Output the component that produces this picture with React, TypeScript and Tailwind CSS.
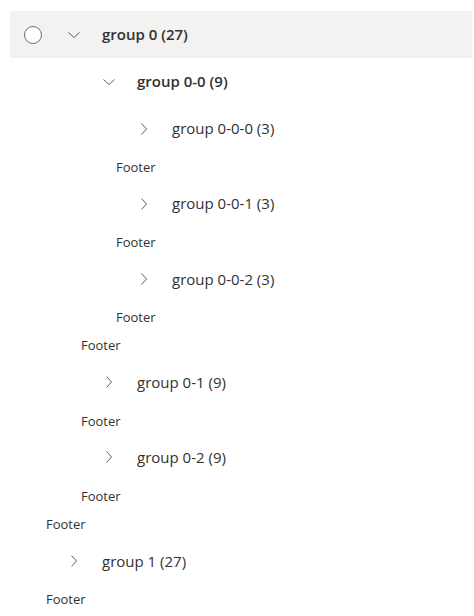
type Group = {
  key: string;
  name: string;
  count: number;
  expanded?: boolean;
  hovered?: boolean;
  children?: Group[];
};

const GROUPS: Group[] = [
  {
    key: "0",
    name: "group 0",
    count: 27,
    expanded: true,
    hovered: true,
    children: [
      {
        key: "0-0",
        name: "group 0-0",
        count: 9,
        expanded: true,
        children: [
          { key: "0-0-0", name: "group 0-0-0", count: 3 },
          { key: "0-0-1", name: "group 0-0-1", count: 3 },
          { key: "0-0-2", name: "group 0-0-2", count: 3 },
        ],
      },
      { key: "0-1", name: "group 0-1", count: 9 },
      { key: "0-2", name: "group 0-2", count: 9 },
    ],
  },
  { key: "1", name: "group 1", count: 27 },
];

const INDENT = 35;

function ChevronDown() {
  return (
    <svg width="12" height="12" viewBox="0 0 12 12" fill="none">
      <path d="M0.5 3.5 L6 8.5 L11.5 3.5" stroke="#605e5c" strokeWidth="1" />
    </svg>
  );
}

function ChevronRight() {
  return (
    <svg width="12" height="12" viewBox="0 0 12 12" fill="none">
      <path d="M3.5 0.5 L8.5 6 L3.5 11.5" stroke="#605e5c" strokeWidth="1" />
    </svg>
  );
}

function GroupHeader({ group, level }: { group: Group; level: number }) {
  return (
    <div
      className={`flex items-center h-[47px] ${
        group.hovered ? "bg-[#f3f2f1]" : ""
      }`}
    >
      {/* Check cell */}
      <div className="w-[46px] h-full flex items-center justify-center shrink-0">
        {group.hovered && (
          <span className="w-[18px] h-[18px] rounded-full border border-[#6f6d6b] bg-white" />
        )}
      </div>
      <div className="shrink-0" style={{ width: level * INDENT }} />
      {/* Expand button */}
      <div className="w-[36px] h-full flex items-center justify-center shrink-0">
        {group.expanded ? <ChevronDown /> : <ChevronRight />}
      </div>
      <div
        className={`pl-[10px] text-[15px] text-[#323130] whitespace-nowrap ${
          group.expanded ? "font-semibold" : "font-normal"
        }`}
      >
        {group.name} ({group.count})
      </div>
    </div>
  );
}

function GroupFooter({ level }: { level: number }) {
  return (
    <div
      className="flex items-center h-[28.2px] pt-[3px] text-[13px] text-[#323130]"
      style={{ paddingLeft: 36 + level * INDENT }}
    >
      Footer
    </div>
  );
}

function GroupNode({ group, level }: { group: Group; level: number }) {
  return (
    <div className="flex flex-col">
      <GroupHeader group={group} level={level} />
      {group.expanded &&
        group.children?.map((c) => (
          <GroupNode key={c.key} group={c} level={level + 1} />
        ))}
      <GroupFooter level={level} />
    </div>
  );
}

export default function App() {
  return (
    <div
      className="min-h-screen bg-white pt-[11px] pl-[10px] pr-[2px]"
      style={{ fontFamily: '"Open Sans", "Noto Sans", sans-serif' }}
    >
      {GROUPS.map((g) => (
        <GroupNode key={g.key} group={g} level={0} />
      ))}
    </div>
  );
}
